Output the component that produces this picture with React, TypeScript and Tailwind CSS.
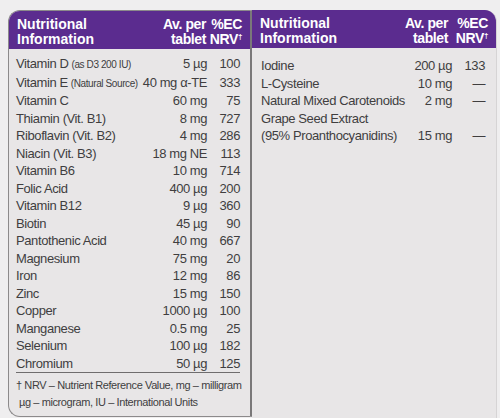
import React from 'react';

type Row = { name: string; note?: string; amount: string; nrv: string };

const leftRows: Row[] = [
  { name: 'Vitamin D', note: '(as D3 200 IU)', amount: '5 µg', nrv: '100' },
  { name: 'Vitamin E', note: '(Natural Source)', amount: '40 mg α-TE', nrv: '333' },
  { name: 'Vitamin C', amount: '60 mg', nrv: '75' },
  { name: 'Thiamin (Vit. B1)', amount: '8 mg', nrv: '727' },
  { name: 'Riboflavin (Vit. B2)', amount: '4 mg', nrv: '286' },
  { name: 'Niacin (Vit. B3)', amount: '18 mg NE', nrv: '113' },
  { name: 'Vitamin B6', amount: '10 mg', nrv: '714' },
  { name: 'Folic Acid', amount: '400 µg', nrv: '200' },
  { name: 'Vitamin B12', amount: '9 µg', nrv: '360' },
  { name: 'Biotin', amount: '45 µg', nrv: '90' },
  { name: 'Pantothenic Acid', amount: '40 mg', nrv: '667' },
  { name: 'Magnesium', amount: '75 mg', nrv: '20' },
  { name: 'Iron', amount: '12 mg', nrv: '86' },
  { name: 'Zinc', amount: '15 mg', nrv: '150' },
  { name: 'Copper', amount: '1000 µg', nrv: '100' },
  { name: 'Manganese', amount: '0.5 mg', nrv: '25' },
  { name: 'Selenium', amount: '100 µg', nrv: '182' },
  { name: 'Chromium', amount: '50 µg', nrv: '125' },
];

const rightRows: Row[] = [
  { name: 'Iodine', amount: '200 µg', nrv: '133' },
  { name: 'L-Cysteine', amount: '10 mg', nrv: '—' },
  { name: 'Natural Mixed Carotenoids', amount: '2 mg', nrv: '—' },
  { name: 'Grape Seed Extract', amount: '', nrv: '' },
  { name: '(95% Proanthocyanidins)', amount: '15 mg', nrv: '—' },
];

const Header = ({ nrvWidth }: { nrvWidth: string }) => (
  <div className="flex items-start bg-[#5b2c8f] px-[8px] pt-[6px] pb-[2px] text-white font-['Liberation_Sans',sans-serif] font-bold text-[14px] leading-[15px]">
    <div className="flex-1">
      <div>Nutritional</div>
      <div>Information</div>
    </div>
    <div className="text-right tracking-[-0.4px]">
      <div>Av. per</div>
      <div>tablet</div>
    </div>
    <div className={`text-right tracking-[-0.4px] ${nrvWidth}`}>
      <div>%EC</div>
      <div className="flex justify-end items-start">
        <span>NRV</span>
        <span className="text-[8px] leading-[8px] mt-[1px]">†</span>
      </div>
    </div>
  </div>
);

const DataRow = ({ row }: { row: Row }) => (
  <div className="flex whitespace-nowrap">
    <div className="flex-1">
      {row.name}
      {row.note && <span className="text-[10px] tracking-[-0.4px] ml-[3px]">{row.note}</span>}
    </div>
    <div className="text-right">{row.amount}</div>
    <div className="w-[33px] text-right">{row.nrv}</div>
  </div>
);

export default function App() {
  return (
    <div className="w-[500px] h-[418px] overflow-hidden bg-[#efeeef] pt-[10px] pl-[8px] flex items-start">
      <div className="w-[244px] h-[407px] shrink-0 flex flex-col bg-[#e8e6e7] border border-[#8c8a8b] border-r-2 border-r-[#7a7879] rounded-tl-[12px] rounded-bl-[12px] overflow-hidden">
        <Header nrvWidth="w-[36px]" />
        <div className="flex-1 pl-[7px] pr-[10px] pt-[6px] text-[13px] tracking-[-0.4px] leading-[17.5px] text-[#403e3f] font-['Liberation_Sans',sans-serif]">
          {leftRows.map((r) => (
            <DataRow key={r.name} row={r} />
          ))}
          <div className="border-t-[1.5px] border-[#6f6d6e] pt-[4px] text-[11px] leading-[17px] tracking-[-0.4px] whitespace-nowrap">
            <div>† NRV – Nutrient Reference Value, mg – milligram</div>
            <div className="pl-[3px]">µg – microgram, IU – International Units</div>
          </div>
        </div>
      </div>
      <div className="w-[245px] h-[420px] shrink-0 flex flex-col bg-[#e8e6e7] border-r border-[#d6d4d5] rounded-tr-[12px] overflow-hidden">
        <Header nrvWidth="w-[40px]" />
        <div className="pl-[9px] pr-[11px] pt-[9px] text-[13px] tracking-[-0.4px] leading-[17.5px] text-[#403e3f] font-['Liberation_Sans',sans-serif]">
          {rightRows.map((r) => (
            <DataRow key={r.name} row={r} />
          ))}
        </div>
      </div>
    </div>
  );
}
